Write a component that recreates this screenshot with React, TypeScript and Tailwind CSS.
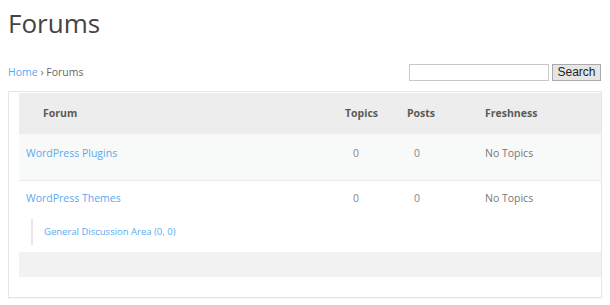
import React from "react";

// ===== Data =====
type Forum = {
  name: string;
  topics: number;
  posts: number;
  freshness: string;
  subforums?: string[];
};

const FORUMS: Forum[] = [
  { name: "WordPress Plugins", topics: 0, posts: 0, freshness: "No Topics" },
  {
    name: "WordPress Themes",
    topics: 0,
    posts: 0,
    freshness: "No Topics",
    subforums: ["General Discussion Area (0, 0)"],
  },
];

const cols = "grid grid-cols-[326px_62px_78px_1fr]";

export default function App() {
  return (
    <main className="w-[610px] h-[305px] bg-white px-2 font-['Open_Sans',sans-serif] text-[#555]">
      <h1 className="pt-[6px] text-[26px] leading-[34px] text-[#444]">Forums</h1>

      {/* breadcrumb + search */}
      <div className="mt-[24px] flex items-center justify-between pr-[1px]">
        <div className="text-[10.5px] text-[#666]">
          <a className="text-[#5aaaf0]">Home</a> › Forums
        </div>
        <div className="flex items-center gap-[3px] font-['Liberation_Sans',sans-serif]">
          <input className="w-[140px] h-[17px] border border-[#c8c8c8] bg-white" />
          <button className="h-[17px] w-[49px] border border-[#aaa] bg-[#e6e6e6] text-[12px] leading-[15px] text-[#222]">
            Search
          </button>
        </div>
      </div>

      {/* forum list box */}
      <div className="mt-[10px] border border-[#e6e6e6] pl-[10px] pt-[1px] pb-[20px] shadow-[0_1px_1px_rgba(0,0,0,0.04)]">
        <div className="text-[10.5px]">
          {/* header */}
          <div
            className={`${cols} h-[41px] items-center font-bold text-[#5a5a5a] bg-[#ededed] bg-[radial-gradient(#e0e0e0_0.6px,transparent_0.7px)] bg-[length:6px_6px]`}
          >
            <div className="pl-[24px]">Forum</div>
            <div>Topics</div>
            <div>Posts</div>
            <div>Freshness</div>
          </div>

          {FORUMS.map((f, i) => (
            <div
              key={f.name}
              className={
                i % 2 === 0
                  ? "bg-[#f8f9f9] border-b border-[#ececec] h-[47px] pt-[12px]"
                  : "bg-white h-[71px] pt-[10px]"
              }
            >
              <div className={`${cols}`}>
                <a className="pl-[7px] text-[#5aaaf0]">{f.name}</a>
                <div className="pl-[8px] text-[#888]">{f.topics}</div>
                <div className="pl-[7px] text-[#888]">{f.posts}</div>
                <div className="text-[#777]">{f.freshness}</div>
              </div>
              {f.subforums && (
                <div className="ml-[12px] mt-[12px] border-l-2 border-[#e8e8e8] py-[6px] pl-[11px]">
                  {f.subforums.map((s) => (
                    <a key={s} className="block text-[9.5px] leading-[14px] text-[#5aaaf0]">
                      {s}
                    </a>
                  ))}
                </div>
              )}
            </div>
          ))}

          {/* footer */}
          <div className="h-[25px] bg-[#f2f2f2]" />
        </div>
      </div>
    </main>
  );
}
